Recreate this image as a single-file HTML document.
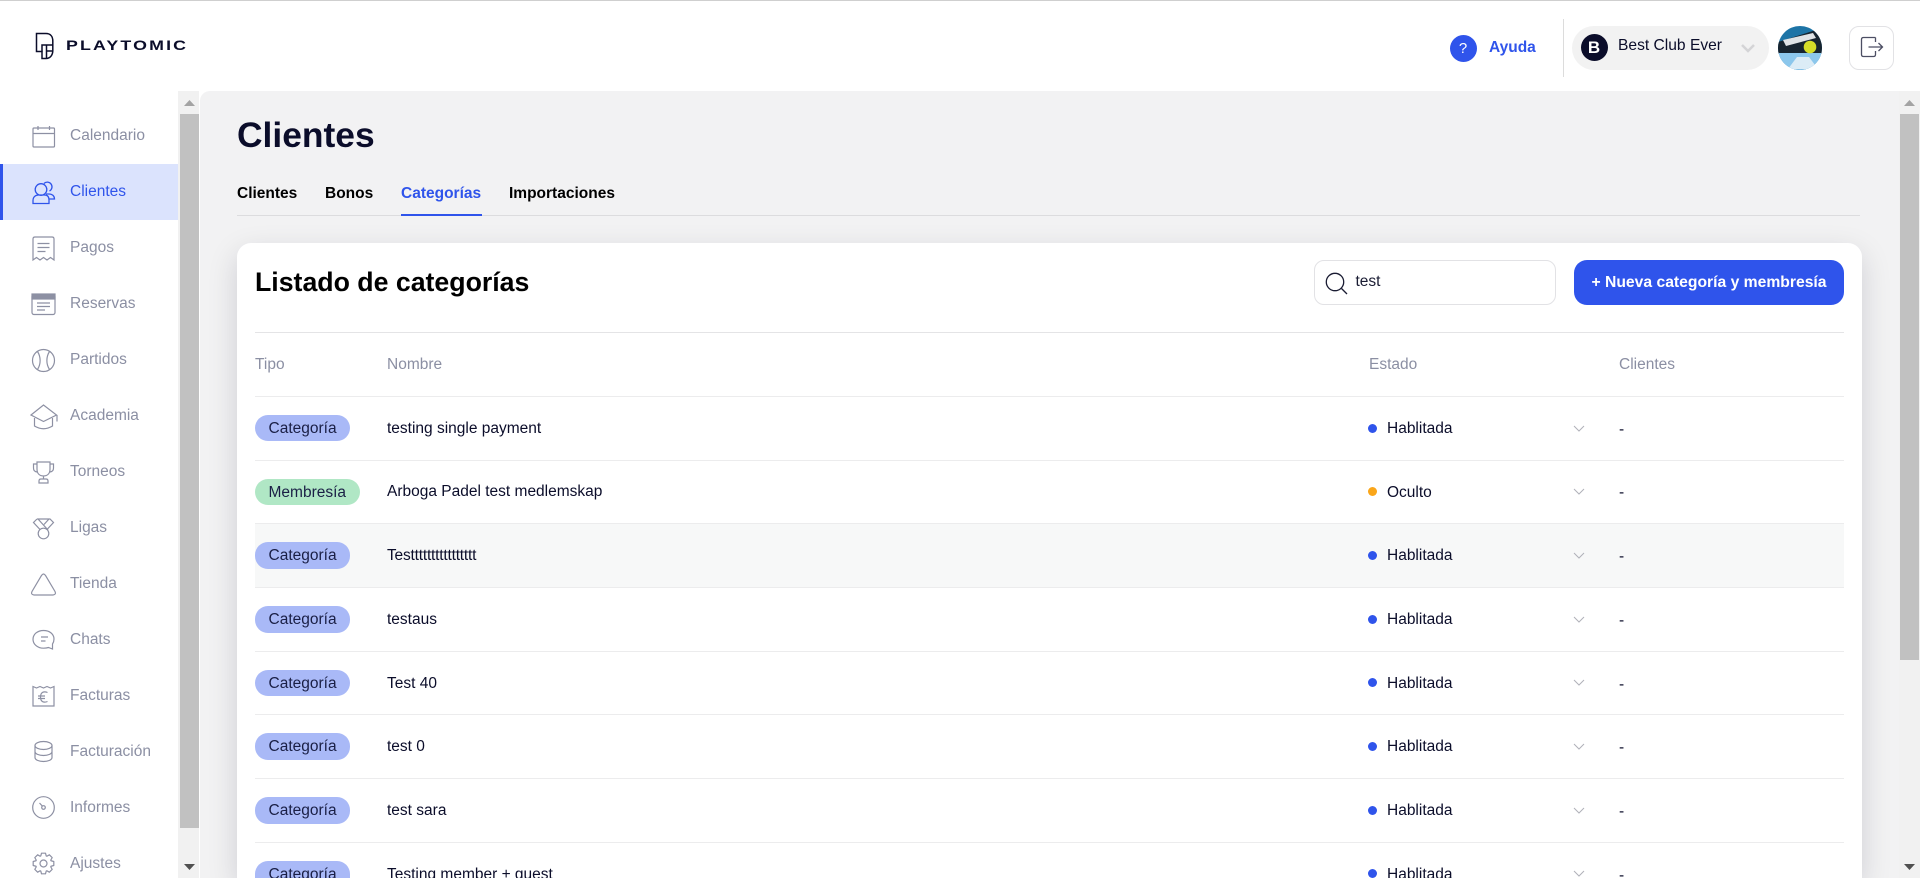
<!DOCTYPE html>
<html lang="es"><head><meta charset="utf-8"><title>Clientes</title>
<style>
*{box-sizing:border-box}
html,body{margin:0;padding:0;width:1920px;height:878px;overflow:hidden;background:#fff;font-family:"Liberation Sans",Arial,sans-serif;color:#0b0d2a}
#w{position:relative;width:1920px;height:878px;overflow:hidden;background:#fff}
.a,.t,.s{position:absolute}
.t{font-size:15.5px;line-height:20px;white-space:nowrap}
.s{font-size:15.5px;line-height:20px;left:70px;color:#8b8fa3;white-space:nowrap;margin-top:1px}
.b{font-weight:bold}
.badge{position:absolute;left:255px;width:95px;height:26px;border-radius:13px;background:#a9b9f7;font-size:15.5px;line-height:27px;padding-left:13.5px;color:#1a1f45;white-space:nowrap}
.badge.m{width:105px;background:#b0e7c5}
.hl{position:absolute;left:255px;width:1589px;height:1px;background:#ececed}
.dot{position:absolute;left:1367.5px;width:9px;height:9px;border-radius:50%;background:#2f54eb}
.n,.e,.d{position:absolute;font-size:15.5px;line-height:20px;white-space:nowrap;color:#0b0d2a;margin-top:1px}
.n{left:387px}
.e{left:1387px}
.d{left:1619px}
.clip{overflow:hidden}
svg{position:absolute;overflow:visible}
</style></head><body><div id="w">

<div class="a" style="left:0;top:0;width:1920px;height:1px;background:#cfcfcf"></div>

<!-- header -->
<svg style="left:0;top:0" width="60" height="70" viewBox="0 0 60 70" fill="none" stroke="#0b0d2a" stroke-width="1.500">
<path d="M36.500 33.500H46c4.500 0 6.800 3 6.800 7.500v9.500c0 5-3 8-6.800 8h-4v-7h-5.500z"/>
<path d="M42 51.500V45h10.800M46.500 45v13.500M52 51h-5.500"/>
</svg>
<div class="a b" style="left:66px;top:34.500px;font-size:14px;line-height:20px;letter-spacing:1.7px;color:#0b0d2a;white-space:nowrap;transform:scaleX(1.27);transform-origin:0 50%">PLAYTOMIC</div>

<div class="a" style="left:1449.500px;top:34.500px;width:27px;height:27px;border-radius:50%;background:#2f54eb;color:#fff;text-align:center;font-size:15px;line-height:27px">?</div>
<div class="t b" style="left:1489px;top:38px;color:#2f54eb">Ayuda</div>
<div class="a" style="left:1562.500px;top:19px;width:1px;height:58px;background:#dcdcdc"></div>
<div class="a" style="left:1572px;top:26px;width:197px;height:44px;border-radius:22px;background:#f2f2f2"></div>
<div class="a b" style="left:1580.500px;top:34px;width:27px;height:27px;border-radius:50%;background:#0b0d2a;color:#fff;text-align:center;font-size:17px;line-height:27px">B</div>
<div class="t" style="left:1618px;top:36px;font-size:15.600px">Best Club Ever</div>
<svg style="left:1740px;top:43px" width="16" height="10" viewBox="0 0 16 10" fill="none" stroke="#d4d4d6" stroke-width="2.500"><path d="M2 2l6 6 6-6"/></svg>

<svg style="left:1778px;top:26px" width="44" height="44" viewBox="0 0 44 44">
<defs><clipPath id="av"><circle cx="22" cy="22" r="22"/></clipPath></defs>
<g clip-path="url(#av)">
<rect width="44" height="44" fill="#1d74a6"/>
<path d="M0 16 38 4l6 6v18H0z" fill="#17242f"/>
<rect y="27" width="44" height="17" fill="#8cc7ec"/>
<path d="M10 43l9-12h12l9 12z" fill="#dcecf6"/>
<path d="M5 14 35 7l3 5-30 8z" fill="#dfe3e6"/>
<circle cx="32" cy="21" r="6.300" fill="#d4dc28"/>
</g></svg>

<div class="a" style="left:1849px;top:26px;width:45px;height:44px;border:1px solid #e2e2e5;border-radius:10px;background:#fff"></div>
<svg style="left:1860px;top:36px" width="26" height="24" viewBox="0 0 26 24" fill="none" stroke="#4c4e63" stroke-width="1.300"><path d="M15.500 1.500H3.500q-2 0-2 2v15q0 2 2 2h10q2 0 2-2v-3.500M15.500 1.500v4.500M8.500 11h13.500M18.500 7l4 4-4 4"/></svg>

<!-- sidebar -->
<div class="a" style="left:0;top:164px;width:178px;height:56px;background:#dbe3fd"></div>
<div class="a" style="left:0;top:164px;width:3px;height:56px;background:#2f54eb"></div>

<div class="s" style="top:125px">Calendario</div>
<div class="s" style="top:181px;color:#2f54eb">Clientes</div>
<div class="s" style="top:237px">Pagos</div>
<div class="s" style="top:293px">Reservas</div>
<div class="s" style="top:349px">Partidos</div>
<div class="s" style="top:405px">Academia</div>
<div class="s" style="top:461px">Torneos</div>
<div class="s" style="top:517px">Ligas</div>
<div class="s" style="top:573px">Tienda</div>
<div class="s" style="top:629px">Chats</div>
<div class="s" style="top:685px">Facturas</div>
<div class="s" style="top:741px">Facturación</div>
<div class="s" style="top:797px">Informes</div>
<div class="s" style="top:853px">Ajustes</div>

<svg style="left:0;top:0" width="178" height="878" viewBox="0 0 178 878" fill="none" stroke="#8d90a3" stroke-width="1.200">
<!-- calendar -->
<rect x="33" y="128" width="21.500" height="19" rx="1"/><path d="M33 133.500h21.500M38 126v4M49.500 126v4"/>
<!-- clientes -->
<g stroke="#2f54eb" stroke-width="1.300"><circle cx="41" cy="189.500" r="5.800"/><path d="M44 183.500a4.700 4.700 0 1 1 5.500 7.500M33 203.500v-3c0-3.500 2.500-5.500 5.500-5.500h6c3.500 0 4.500 2.500 4.500 5v3.500zM46 194h3c3 0 5.500 1.800 5.500 5h-5.500"/></g>
<!-- pagos -->
<path d="M33 260v-21q0-2 2-2h17q2 0 2 2v21l-3.500-2.500-3.500 2.500-3.500-2.500-3.500 2.500-3.500-2.500-3.500 2.500z"/><path d="M37.500 243.500h12M37.500 247.500h12M37.500 251.500h8"/>
<!-- reservas -->
<rect x="32" y="294.500" width="23" height="20" rx="2"/><rect x="32" y="294" width="23" height="5" fill="#8d90a3"/><path d="M37 303h13M37 306.500h13M37 310h8"/>
<!-- partidos -->
<circle cx="43.500" cy="360.500" r="11"/><path d="M37.500 351.500c3.500 5.500 3.500 12.500 0 18M49.500 351.500c-3.500 5.500-3.500 12.500 0 18"/>
<!-- academia -->
<path d="M31 415 43.500 405 56.500 415l-13 6.500z"/><path d="M34.500 418v8q9 5.500 18 0v-8M57 415v6.500"/>
<!-- torneos -->
<path d="M37 462h13v7c0 5-3 7-6.500 7S37 474 37 469zM37 464h-3.500v4q0 3.500 3.500 4M50 464h3.500v4q0 3.500-3.500 4M43.500 476v3M39 483v-2q0-2 2-2h5q2 0 2 2v2z"/>
<!-- ligas -->
<circle cx="43.500" cy="533.500" r="5.300"/><path d="M37 519h13l3.500 3.500-6.500 7M37 519l-3.500 3.500 6.500 7M38 519l10 11M49 519l-5 5.500"/>
<!-- tienda -->
<path d="M41.500 575.500q2-3 4 0l9.500 16q1.500 3-2 3.500H34q-3.500-.5-2-3.500z"/>
<!-- chats -->
<path d="M43.500 630.500c6 0 10.500 3.500 10.500 8.500 0 2.500-.5 3.500-1.500 5v5l-4-1.500c-1.500.5-3 .7-5 .7-6 0-10.500-4-10.500-9s4.500-8.700 10.500-8.700z"/><path d="M41 637h7M41 641h4.500"/>
<!-- facturas -->
<path d="M33 686.500l3.500 1.500 3.500-1.500 3.500 1.500 3.500-1.500 3.500 1.500 3.500-1.500V706H33z"/><path d="M47.500 692.500c-3.500-1.500-7-.5-7 4.500s3.500 6 7 4.500M38 696h7M38 698.500h7"/>
<!-- facturacion -->
<ellipse cx="43.500" cy="745.500" rx="8.500" ry="4"/><path d="M35 745.500v6c0 2.300 3.800 4 8.500 4s8.500-1.700 8.500-4v-6M35 751.500v6c0 2.300 3.800 4 8.500 4s8.500-1.700 8.500-4v-6"/>
<!-- informes -->
<circle cx="43.500" cy="807.500" r="10.800"/><circle cx="43.500" cy="807.500" r="1.800"/><path d="M42.300 806 39.500 803"/>
<!-- ajustes -->
<circle cx="43.500" cy="863.500" r="3.500"/>
<polygon stroke-linejoin="round" transform="translate(43.500 863.500)" points="7.520,-2.740 10.310,-2 10.310,2 7.520,2.740 7.250,3.380 8.700,5.870 5.870,8.700 3.380,7.250 2.740,7.520 2,10.310 -2,10.310 -2.740,7.520 -3.380,7.250 -5.870,8.700 -8.700,5.870 -7.250,3.380 -7.520,2.740 -10.310,2 -10.310,-2 -7.520,-2.740 -7.250,-3.380 -8.700,-5.870 -5.870,-8.700 -3.380,-7.250 -2.740,-7.520 -2,-10.310 2,-10.310 2.740,-7.520 3.380,-7.250 5.870,-8.700 8.700,-5.870 7.250,-3.380"/>
</svg>

<!-- sidebar scrollbar -->
<div class="a" style="left:178px;top:91px;width:21px;height:787px;background:#f1f1f1"></div>
<div class="a" style="left:180px;top:114px;width:19px;height:714px;background:#c1c1c1"></div>
<svg style="left:184px;top:100px" width="11" height="6" viewBox="0 0 11 6"><path d="M5.500 0 11 6H0z" fill="#a3a3a3"/></svg>
<svg style="left:184px;top:864px" width="11" height="6" viewBox="0 0 11 6"><path d="M0 0h11L5.500 6z" fill="#505050"/></svg>

<!-- main -->
<div class="a" style="left:200px;top:91px;width:1699px;height:787px;background:#f2f2f3;border-top-left-radius:10px;overflow:hidden">
  <div class="a" style="left:37px;top:152px;width:1625px;height:635px;background:#fff;border-radius:14px 14px 0 0;box-shadow:0 10px 30px rgba(12,12,40,.15)"></div>
</div>

<div class="a b" style="left:237px;top:115px;font-size:35.400px;line-height:40px;color:#0b0d2a">Clientes</div>
<div class="t b" style="left:237px;top:184px;color:#000">Clientes</div>
<div class="t b" style="left:325px;top:184px;color:#000">Bonos</div>
<div class="t b" style="left:401px;top:184px;color:#2f54eb">Categorías</div>
<div class="t b" style="left:509px;top:184px;color:#000">Importaciones</div>
<div class="a" style="left:237px;top:215px;width:1623px;height:1px;background:#dcdcde"></div>
<div class="a" style="left:401px;top:214px;width:81px;height:2px;background:#2f54eb"></div>

<div class="a b" style="left:255px;top:267px;font-size:26.700px;line-height:30px;color:#000;white-space:nowrap">Listado de categorías</div>

<div class="a" style="left:1314px;top:260px;width:242px;height:45px;border:1px solid #e2e2e5;border-radius:10px;background:#fff"></div>
<svg style="left:1324px;top:271px" width="26" height="26" viewBox="0 0 26 26" fill="none" stroke="#1a1c33" stroke-width="1.300"><circle cx="11" cy="11" r="8.700"/><path d="M17.500 17.500l5.500 5.500"/></svg>
<div class="t" style="left:1355.500px;top:272px;color:#1a1c33">test</div>

<div class="a b" style="left:1574px;top:260px;width:270px;height:45px;border-radius:13px;background:#2f54eb;color:#fff;text-align:center;font-size:15.700px;line-height:45px;white-space:nowrap">+ Nueva categoría y membresía</div>

<div class="hl" style="top:332px;background:#e4e4e6"></div>
<div class="t" style="left:255px;top:355px;color:#8b8fa3">Tipo</div>
<div class="t" style="left:387px;top:355px;color:#8b8fa3">Nombre</div>
<div class="t" style="left:1369px;top:355px;color:#8b8fa3">Estado</div>
<div class="t" style="left:1619px;top:355px;color:#8b8fa3">Clientes</div>

<div class="a" style="left:255px;top:524px;width:1589px;height:63px;background:#f7f8f8"></div>
<div class="hl" style="top:396px"></div><div class="hl" style="top:460px"></div><div class="hl" style="top:523px"></div><div class="hl" style="top:587px"></div><div class="hl" style="top:651px"></div><div class="hl" style="top:714px"></div><div class="hl" style="top:778px"></div><div class="hl" style="top:842px"></div>

<div class="badge" style="top:415px">Categoría</div><div class="n" style="top:418px">testing single payment</div>
<div class="badge m" style="top:479px">Membresía</div><div class="n" style="top:481px">Arboga Padel test medlemskap</div>
<div class="badge" style="top:542px;height:27px">Categoría</div><div class="n" style="top:545px;letter-spacing:-.2px">Testttttttttttttttt</div>
<div class="badge" style="top:606px;height:27px">Categoría</div><div class="n" style="top:609px">testaus</div>
<div class="badge" style="top:670px">Categoría</div><div class="n" style="top:673px">Test 40</div>
<div class="badge" style="top:733px;height:27px">Categoría</div><div class="n" style="top:736px">test 0</div>
<div class="badge" style="top:797px;height:27px">Categoría</div><div class="n" style="top:800px">test sara</div>
<div class="badge clip" style="top:861px;height:17px;border-radius:13px 13px 0 0">Categoría</div><div class="n clip" style="top:864px;height:13px">Testing member + guest</div>

<div class="dot" style="top:423.500px"></div><div class="e" style="top:418px">Hablitada</div><div class="d" style="top:419px">-</div>
<div class="dot" style="top:487px;background:#faa61a"></div><div class="e" style="top:482px">Oculto</div><div class="d" style="top:482px">-</div>
<div class="dot" style="top:551px"></div><div class="e" style="top:545px">Hablitada</div><div class="d" style="top:546px">-</div>
<div class="dot" style="top:615px"></div><div class="e" style="top:609px">Hablitada</div><div class="d" style="top:610px">-</div>
<div class="dot" style="top:678px"></div><div class="e" style="top:673px">Hablitada</div><div class="d" style="top:674px">-</div>
<div class="dot" style="top:742px"></div><div class="e" style="top:736px">Hablitada</div><div class="d" style="top:737px">-</div>
<div class="dot" style="top:806px"></div><div class="e" style="top:800px">Hablitada</div><div class="d" style="top:801px">-</div>
<div class="dot" style="top:869px"></div><div class="e clip" style="top:864px;height:13px">Hablitada</div><div class="d clip" style="top:865px;height:12px">-</div>

<svg style="left:1572px;top:0" width="14" height="878" viewBox="0 0 14 878" fill="none" stroke="#b0b1b9" stroke-width="1">
<path d="M2 426l5 5 5-5M2 489l5 5 5-5M2 553l5 5 5-5M2 617l5 5 5-5M2 680l5 5 5-5M2 744l5 5 5-5M2 808l5 5 5-5M2 871l5 5 5-5"/>
</svg>

<!-- right scrollbar -->
<div class="a" style="left:1899px;top:91px;width:21px;height:787px;background:#f1f1f1"></div>
<div class="a" style="left:1900px;top:114px;width:19px;height:546px;background:#c1c1c1"></div>
<svg style="left:1904px;top:100px" width="11" height="6" viewBox="0 0 11 6"><path d="M5.500 0 11 6H0z" fill="#a3a3a3"/></svg>
<svg style="left:1904px;top:864px" width="11" height="6" viewBox="0 0 11 6"><path d="M0 0h11L5.500 6z" fill="#505050"/></svg>

</div></body></html>
